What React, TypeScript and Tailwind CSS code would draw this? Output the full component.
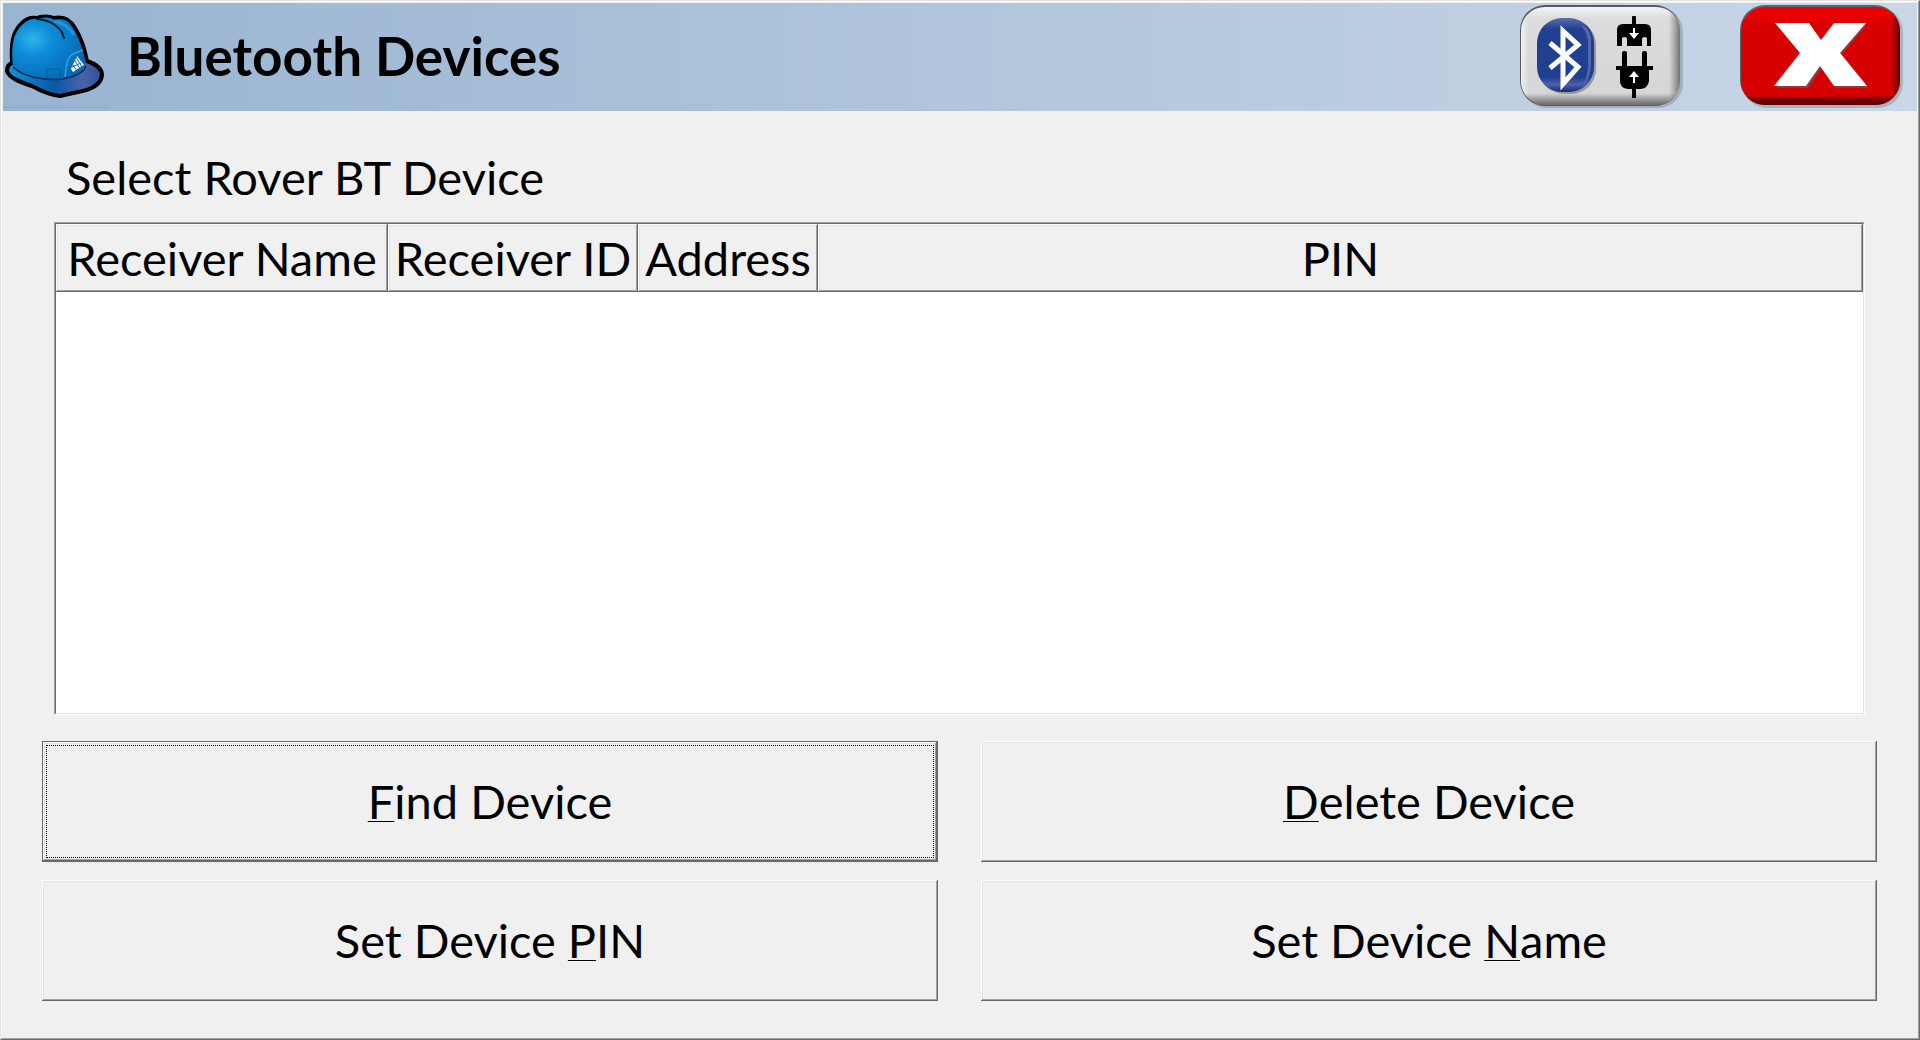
import React from 'react';

const bevel =
  'shadow-[inset_-1px_-1px_0_#696969,inset_1px_1px_0_#ffffff,inset_-2px_-2px_0_#a0a0a0,inset_2px_2px_0_#e3e3e3]';

const columns = [
  { title: 'Receiver Name', width: 'w-[332px]' },
  { title: 'Receiver ID', width: 'w-[250px]' },
  { title: 'Address', width: 'w-[180px]' },
  { title: 'PIN', width: '' },
];

const actions = [
  { before: '', key: 'F', after: 'ind Device', focused: true },
  { before: '', key: 'D', after: 'elete Device', focused: false },
  { before: 'Set Device ', key: 'P', after: 'IN', focused: false },
  { before: 'Set Device ', key: 'N', after: 'ame', focused: false },
];

function HelmetIcon() {
  return (
    <svg viewBox="0 0 108 108" className="h-[108px] w-[108px] shrink-0" aria-hidden="true">
      <defs>
        <radialGradient id="dome" cx="0.28" cy="0.35" r="0.75">
          <stop offset="0" stopColor="#2fb4ee" />
          <stop offset="0.35" stopColor="#0d8cd6" />
          <stop offset="1" stopColor="#0468b4" />
        </radialGradient>
        <linearGradient id="brim" x1="0" y1="0" x2="1" y2="0">
          <stop offset="0" stopColor="#1093dc" />
          <stop offset="0.5" stopColor="#0a58a6" />
          <stop offset="0.8" stopColor="#4a63a8" />
          <stop offset="1" stopColor="#2d4f97" />
        </linearGradient>
      </defs>
      <path
        d="M9 60 C8 42 9 29 19 20 C24 15 29 14 34 15 C38 13 46 13 51 15 C61 13 67 16 72 25 C78 35 82 47 84 58 C93 61 99 66 99 72 C98 82 87 87 75 89 L57 93 C48 92 38 88 29 83 C17 79 6 75 4 68 C4 64 6 61 9 60 Z"
        fill="url(#brim)"
        stroke="#000"
        strokeWidth="4"
        strokeLinejoin="round"
      />
      <path
        d="M10 64 C8 42 10 30 20 21 C25 16 31 15 36 16 C42 14 47 14 51 17 C60 15 66 17 71 27 C77 37 80 48 83 60 C82 68 72 74 61 76 C42 78 20 74 10 64 Z"
        fill="url(#dome)"
      />
      <path d="M10 64 C20 74 42 78 60 76 L63 75 C73 73 81 69 83 63" fill="none" stroke="#062a52" strokeWidth="1.5" />
      <path d="M34 16 C45 17 58 22 61 35" fill="none" stroke="#021325" strokeWidth="2" strokeLinecap="round" />
      <path d="M51 18 C61 20 67 25 71 32" fill="none" stroke="#25a5e4" strokeWidth="3" opacity="0.7" />
      <path d="M62 74 C63 62 64 53 72 50 L80 47" fill="none" stroke="#2aa5e5" strokeWidth="1.5" />
      <path d="M44 75 V66 H57 V76" fill="none" stroke="#075a9c" strokeWidth="1" />
      {/* striped emblem on the side panel */}
      <path d="M74 53 L81 62 L70 69 L68 66 Z" fill="#fff" />
      <path d="M71 56 L77 66 M73 54 L79 64 M70 62 L74 68" stroke="#1267b2" strokeWidth="1" fill="none" />
      <path d="M69 64 L78 60" stroke="#1267b2" strokeWidth="1" fill="none" />
      <path d="M0 104 H104" stroke="#8ca6c6" strokeWidth="1" />
    </svg>
  );
}

function ConnectionIcon() {
  return (
    <svg viewBox="0 0 164 104" className="h-[104px] w-[164px]" aria-hidden="true">
      <defs>
        <linearGradient id="plate" x1="0" y1="0" x2="0" y2="1">
          <stop offset="0" stopColor="#f4f4f4" />
          <stop offset="0.12" stopColor="#dcdcdc" />
          <stop offset="0.88" stopColor="#d6d6d6" />
          <stop offset="0.96" stopColor="#8b8b8b" />
          <stop offset="1" stopColor="#6c6c6c" />
        </linearGradient>
        <linearGradient id="plateSide" x1="0" y1="0" x2="1" y2="0">
          <stop offset="0" stopColor="#fff" stopOpacity="0.6" />
          <stop offset="0.05" stopColor="#fff" stopOpacity="0" />
          <stop offset="0.93" stopColor="#777" stopOpacity="0" />
          <stop offset="1" stopColor="#666" stopOpacity="0.9" />
        </linearGradient>
        <linearGradient id="badge" x1="0" y1="0" x2="0" y2="1">
          <stop offset="0" stopColor="#5f6cae" />
          <stop offset="0.15" stopColor="#21408f" />
          <stop offset="0.8" stopColor="#1f3f91" />
          <stop offset="0.9" stopColor="#4e60ad" />
          <stop offset="1" stopColor="#122a70" />
        </linearGradient>
      </defs>
      <rect x="3" y="3" width="161" height="101" rx="25" fill="#a4afbc" />
      <rect x="1" y="1" width="160" height="101" rx="25" fill="#555b63" />
      <rect x="2" y="3" width="159" height="98" rx="24" fill="url(#plate)" />
      <rect x="2" y="3" width="159" height="98" rx="24" fill="url(#plateSide)" />
      <rect x="20" y="16" width="57" height="74" rx="25" fill="#999" />
      <rect x="18" y="14" width="57" height="74" rx="25" fill="url(#badge)" />
      <path d="M68 24 Q73 31 72 42 V60 Q72 74 64 81 Q69 72 69 60 V42 Q70 31 62 21 Z" fill="#5565ad" />
      <path
        d="M31 39 L59 63 L44 80 V27 L59 41 L31 64"
        fill="none"
        stroke="#fff"
        strokeWidth="5"
        strokeLinejoin="miter"
      />
      <g fill="#000">
        <rect x="113" y="12" width="4" height="13" rx="1" />
        <path d="M98 42 V26 Q98 20 104 20 H126 Q132 20 132 26 V42 H128 V35 Q128 33 126 33 Q123 33 123 35 V42 H108 V35 Q108 33 105 33 Q103 33 103 35 V42 Z" />
        <rect x="103" y="47" width="5" height="20" rx="2" />
        <rect x="123" y="47" width="5" height="20" rx="2" />
        <path d="M97 62 H134 V66 H130 V77 Q129 84 122 85 H117 V94 H113 V85 H109 Q101 84 101 77 V66 H97 Z" />
      </g>
      <g fill="#fff">
        <path d="M114 24 H116 V29 H120 L115 35 L110 29 H114 Z" />
        <path d="M114 79 H116 V73 H120 L115 67 L110 73 H114 Z" />
      </g>
    </svg>
  );
}

function CloseIcon() {
  return (
    <svg viewBox="0 0 164 104" className="h-[104px] w-[164px]" aria-hidden="true">
      <defs>
        <linearGradient id="red" x1="0" y1="0" x2="0" y2="1">
          <stop offset="0" stopColor="#f00000" />
          <stop offset="0.1" stopColor="#e80000" />
          <stop offset="0.16" stopColor="#da0000" />
          <stop offset="0.9" stopColor="#d60000" />
          <stop offset="0.95" stopColor="#700000" />
          <stop offset="1" stopColor="#600000" />
        </linearGradient>
        <linearGradient id="redSide" x1="0" y1="0" x2="1" y2="0">
          <stop offset="0.94" stopColor="#600000" stopOpacity="0" />
          <stop offset="1" stopColor="#500000" stopOpacity="0.9" />
        </linearGradient>
      </defs>
      <rect x="3" y="3" width="161" height="101" rx="25" fill="#aab4c0" />
      <rect x="1" y="1" width="160" height="100" rx="25" fill="#5a6573" />
      <rect x="2" y="3" width="159" height="98" rx="24" fill="url(#red)" />
      <rect x="2" y="3" width="159" height="98" rx="24" fill="url(#redSide)" />
      <path d="M38 21 H71 L83 37 L96 21 H128 L103 50 L130 84 H97 L83 64 L69 84 H37 L63 50 Z" fill="#8d3a3a" />
      <path d="M36 19 H70 L82 36 L95 19 H127 L101 49 L128 82 H95 L81 62 L67 82 H35 L61 49 Z" fill="#fff" />
    </svg>
  );
}

export default function App() {
  return (
    <div className="flex min-h-screen flex-col border border-t-[#e3e3e3] border-r-[#696969] border-b-[#696969] border-l-[#e3e3e3] bg-[#f0f0f0] font-['Lato',sans-serif] text-[47px] text-black">
      <div className="flex flex-1 flex-col border border-t-white border-r-[#a0a0a0] border-b-[#a0a0a0] border-l-white p-px">
        <header className="flex h-[108px] items-center bg-linear-to-r from-[#99b4d1] to-[#c9d7e7]">
          <HelmetIcon />
          <h1 className="ml-4 flex-1 pb-1 text-[53px] leading-none font-bold">Bluetooth Devices</h1>
          <div className="mr-[14px] flex gap-14 self-start pt-px">
            <button type="button" aria-label="Bluetooth connection">
              <ConnectionIcon />
            </button>
            <button type="button" aria-label="Close">
              <CloseIcon />
            </button>
          </div>
        </header>

        <main className="flex flex-1 flex-col pr-10 pb-9 pl-[39px]">
          <h2 className="mt-[34px] px-6 leading-[64px]">Select Rover BT Device</h2>

          {/* Device list */}
          <div className="mx-3 mt-[13px] flex flex-1 flex-col border border-t-[#a0a0a0] border-r-white border-b-white border-l-[#a0a0a0]">
            <div className="flex-1 border border-t-[#696969] border-r-[#e3e3e3] border-b-[#e3e3e3] border-l-[#696969] bg-white">
              <table className="w-full table-fixed border-separate border-spacing-0">
                <thead>
                  <tr>
                    {columns.map((col) => (
                      <th
                        key={col.title}
                        scope="col"
                        className={`h-[68px] bg-[#f0f0f0] p-0 text-center leading-none font-normal whitespace-nowrap ${col.width} ${bevel}`}
                      >
                        {col.title}
                      </th>
                    ))}
                  </tr>
                </thead>
                <tbody />
              </table>
            </div>
          </div>

          {/* Action buttons */}
          <div className="mt-[26px] grid grid-cols-2 gap-x-[43px] gap-y-[18px]">
            {actions.map((action) => (
              <button
                key={action.key}
                type="button"
                className={`h-[121px] leading-none ${action.focused ? 'border border-[#696969] p-[3px]' : ''} ${bevel}`}
              >
                <span
                  className={`flex h-full w-full items-center justify-center whitespace-pre ${
                    action.focused ? 'border border-dotted border-black' : ''
                  }`}
                >
                  {action.before}
                  <span className="underline decoration-1 underline-offset-2">{action.key}</span>
                  {action.after}
                </span>
              </button>
            ))}
          </div>
        </main>
      </div>
    </div>
  );
}
